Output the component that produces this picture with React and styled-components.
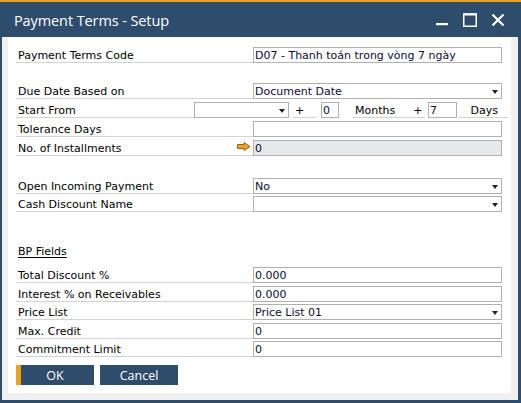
import React from "react";
import styled, { createGlobalStyle } from "styled-components";

const navy = "#2e4d6d";
const orange = "#eda01a";
const lineGrey = "#d2d2d2";
const boxGrey = "#aeb0b4";
const formFont = `"DejaVu Sans", "Liberation Sans", sans-serif`;
const uiFont = `"Open Sans", "Noto Sans", sans-serif`;

const GlobalStyle = createGlobalStyle`
  html, body {
    margin: 0;
    padding: 0;
    overflow: hidden;
    background: #ffffff;
  }
`;

const Window = styled.div`
  width: 521px;
  height: 403px;
  display: flex;
  flex-direction: column;
  background: ${navy};
  border-top: 2px solid ${orange};
  box-sizing: border-box;
`;

const TitleBar = styled.div`
  height: 35px;
  display: flex;
  align-items: center;
  justify-content: space-between;
  padding: 0 14px 0 14px;
  flex-shrink: 0;
`;

const Title = styled.div`
  color: #ffffff;
  font-family: ${uiFont};
  font-size: 14.5px;
  letter-spacing: -0.1px;
  padding-top: 1px;
`;

const Controls = styled.div`
  display: flex;
  align-items: center;
  gap: 14px;
  margin-right: 2px;
`;

const Frame = styled.div`
  flex: 1;
  display: flex;
  padding: 0 3px 3px 2px;
  min-height: 0;
`;

const Inner = styled.div`
  flex: 1;
  display: flex;
  background: #f0f0f0;
  padding: 0 7px 7px 6px;
`;

const Panel = styled.div`
  flex: 1;
  background: #ffffff;
  display: flex;
  flex-direction: column;
  padding: 7px 3px 8px 8px;
  font-family: ${formFont};
  font-size: 11px;
  color: #000;
`;

const Row = styled.div`
  display: flex;
  align-items: flex-end;
  height: ${(p) => p.$h || 19}px;
  flex-shrink: 0;
`;

const Label = styled.div`
  width: ${(p) => p.$w || 237}px;
  flex-shrink: 0;
  align-self: stretch;
  box-sizing: border-box;
  border-bottom: 1px solid ${lineGrey};
  padding-left: 2px;
  padding-right: ${(p) => (p.$right ? "10px" : "0")};
  line-height: 13px;
  white-space: nowrap;
  display: flex;
  align-items: flex-end;
  justify-content: ${(p) => (p.$right ? "flex-end" : "flex-start")};
  position: relative;
`;

const Field = styled.div`
  width: ${(p) => p.$w || 249}px;
  flex-shrink: 0;
  box-sizing: border-box;
  height: 16px;
  border: 1px solid ${boxGrey};
  background: ${(p) => (p.$disabled ? "#e5e8ec" : "#ffffff")};
  display: flex;
  align-items: center;
  justify-content: space-between;
  padding: 1px 3px 0 1px;
  line-height: 14px;
  color: #0c0c30;
  white-space: nowrap;
  overflow: hidden;
`;

const Gap = styled.div`
  width: ${(p) => p.$w}px;
  flex-shrink: 0;
`;

const Spacer = styled.div`
  height: ${(p) => p.$h}px;
  flex-shrink: 0;
`;

const Section = styled.div`
  padding-left: 2px;
  line-height: 15px;
  height: 15px;
  text-decoration: underline;
  text-underline-offset: 2px;
`;

const LinkArrow = styled.svg`
  position: absolute;
  right: 2px;
  bottom: 4px;
`;

const Arrow = styled.span`
  width: 0;
  height: 0;
  border-left: 3.5px solid transparent;
  border-right: 3.5px solid transparent;
  border-top: 4px solid #222;
  flex-shrink: 0;
`;

const Buttons = styled.div`
  display: flex;
  gap: 6px;
  margin-top: auto;
`;

const Button = styled.button`
  width: 78px;
  height: 20px;
  box-sizing: border-box;
  border: none;
  border-left: ${(p) => (p.$primary ? `5px solid ${orange}` : "none")};
  padding: 0;
  background: ${navy};
  color: #ffffff;
  font-family: ${uiFont};
  font-size: 12.5px;
  cursor: pointer;
  padding-right: ${(p) => (p.$primary ? "5px" : "0")};
`;

const Select = ({ value, w }) => (
  <Field $w={w}>
    <span>{value}</span>
    <Arrow />
  </Field>
);

const FormRow = ({ label, h, children }) => (
  <Row $h={h}>
    <Label>{label}</Label>
    {children}
  </Row>
);

export default function App() {
  return (
    <>
      <GlobalStyle />
      <Window>
        <TitleBar>
          <Title>Payment Terms - Setup</Title>
          <Controls>
            <svg width="14" height="14" viewBox="0 0 14 14">
              <rect x="1" y="10" width="12" height="2.2" fill="#fff" />
            </svg>
            <svg width="14" height="14" viewBox="0 0 14 14">
              <rect x="0.75" y="1" width="12.5" height="12.25" fill="none" stroke="#fff" strokeWidth="1.5" />
              <rect x="0" y="0.5" width="14" height="2" fill="#fff" />
            </svg>
            <svg width="14" height="14" viewBox="0 0 14 14">
              <path d="M1.5 1.5 L12.5 12.5 M12.5 1.5 L1.5 12.5" stroke="#fff" strokeWidth="2.2" />
            </svg>
          </Controls>
        </TitleBar>
        <Frame>
          <Inner>
            <Panel>
              <FormRow label="Payment Terms Code">
                <Field>D07 - Thanh toán trong vòng 7 ngày</Field>
              </FormRow>
              <Spacer $h={17} />
              <FormRow label="Due Date Based on">
                <Select value="Document Date" />
              </FormRow>
              <Row>
                <Label $w={178}>Start From</Label>
                <Select value="" w={95} />
                <Gap $w={4} />
                <Label $w={24}>+</Label>
                <Gap $w={4} />
                <Field $w={18}>0</Field>
                <Gap $w={14} />
                <Label $w={72}>
                  Months<Gap $w={18} />+
                </Label>
                <Gap $w={3} />
                <Field $w={29}>7</Field>
                <Gap $w={2} />
                <Label $w={49} $right>
                  Days
                </Label>
              </Row>
              <FormRow label="Tolerance Days">
                <Field />
              </FormRow>
              <Row>
                <Label>
                  No. of Installments
                  <LinkArrow width="14" height="9" viewBox="0 0 14 9">
                    <path
                      d="M0.5 2.5 H7 V0.5 L13 4.5 L7 8.5 V6.5 H0.5 Z"
                      fill="#f2a41c"
                      stroke="#9a6410"
                      strokeWidth="1"
                    />
                  </LinkArrow>
                </Label>
                <Field $disabled>0</Field>
              </Row>
              <Spacer $h={19} />
              <FormRow label="Open Incoming Payment">
                <Select value="No" />
              </FormRow>
              <FormRow label="Cash Discount Name" h={18}>
                <Select value="" />
              </FormRow>
              <Spacer $h={32} />
              <Section>BP Fields</Section>
              <Spacer $h={5} />
              <FormRow label="Total Discount %">
                <Field>0.000</Field>
              </FormRow>
              <FormRow label="Interest % on Receivables">
                <Field>0.000</Field>
              </FormRow>
              <FormRow label="Price List" h={18}>
                <Select value="Price List 01" />
              </FormRow>
              <FormRow label="Max. Credit">
                <Field>0</Field>
              </FormRow>
              <FormRow label="Commitment Limit" h={18}>
                <Field>0</Field>
              </FormRow>
              <Buttons>
                <Button $primary>OK</Button>
                <Button>Cancel</Button>
              </Buttons>
            </Panel>
          </Inner>
        </Frame>
      </Window>
    </>
  );
}
